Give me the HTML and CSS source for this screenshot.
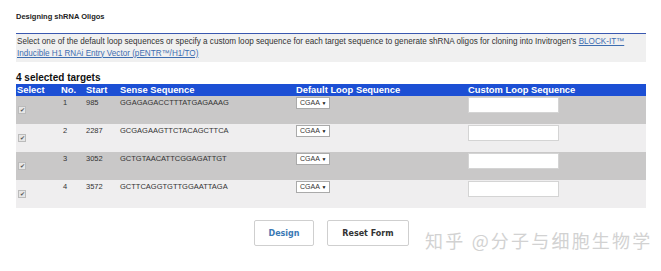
FILE: index.html
```
<!DOCTYPE html>
<html lang="en">
<head>
  <meta charset="UTF-8">
  <title>Designing shRNA Oligos</title>
  <link rel="stylesheet" href="styles.css">
</head>
<body>
  <div class="page">
    <h3 class="title">Designing shRNA Oligos</h3>

    <div class="intro">
      Select one of the default loop sequences or specify a custom loop sequence for each target sequence to generate shRNA oligos for cloning into Invitrogen's <a href="#">BLOCK-IT™ Inducible H1 RNAi Entry Vector (pENTR™/H1/TO)</a>
    </div>

    <h4 class="count">4 selected targets</h4>

    <table class="targets">
      <colgroup>
        <col class="c-select">
        <col class="c-no">
        <col class="c-start">
        <col class="c-seq">
        <col class="c-loop">
        <col class="c-custom">
      </colgroup>
      <thead>
        <tr>
          <th>Select</th>
          <th>No.</th>
          <th>Start</th>
          <th>Sense Sequence</th>
          <th>Default Loop Sequence</th>
          <th>Custom Loop Sequence</th>
        </tr>
      </thead>
      <tbody>
        <tr class="dark">
          <td class="chk"><span class="box">✔</span></td>
          <td class="num">1</td>
          <td>985</td>
          <td>GGAGAGACCTTTATGAGAAAG</td>
          <td><span class="drop">CGAA <i>▼</i></span></td>
          <td><span class="field"></span></td>
        </tr>
        <tr>
          <td class="chk"><span class="box">✔</span></td>
          <td class="num">2</td>
          <td>2287</td>
          <td>GCGAGAAGTTCTACAGCTTCA</td>
          <td><span class="drop">CGAA <i>▼</i></span></td>
          <td><span class="field"></span></td>
        </tr>
        <tr class="dark">
          <td class="chk"><span class="box">✔</span></td>
          <td class="num">3</td>
          <td>3052</td>
          <td>GCTGTAACATTCGGAGATTGT</td>
          <td><span class="drop">CGAA <i>▼</i></span></td>
          <td><span class="field"></span></td>
        </tr>
        <tr>
          <td class="chk"><span class="box">✔</span></td>
          <td class="num">4</td>
          <td>3572</td>
          <td>GCTTCAGGTGTTGGAATTAGA</td>
          <td><span class="drop">CGAA <i>▼</i></span></td>
          <td><span class="field"></span></td>
        </tr>
      </tbody>
    </table>

    <div class="actions">
      <button class="btn btn-design">Design</button>
      <button class="btn">Reset Form</button>
    </div>

    <div class="watermark">知乎 @分子与细胞生物学</div>
  </div>
</body>
</html>
```

FILE: styles.css
```
/* mise en page generale */
body {
  margin: 0;
  background: #fff;
  font-family: "Liberation Sans", Arial, sans-serif;
  color: #333;
}

.page {
  position: relative;
  width: 630px;
  padding: 12px 0 24px 16px;
}

.title {
  margin: 0;
  font-size: 7.5px;
  line-height: 9px;
  font-weight: bold;
  color: #222;
}

.intro {
  margin-top: 12px;
  border-top: 1px solid #3a58b0;
  background: #f0f0f0;
  padding: 2px 4px 3px 1px;
  font-size: 8.15px;
  line-height: 11.5px;
  color: #333;
}

.intro a {
  color: #3d6db0;
}

.count {
  margin: 10px 0 0 0;
  font-size: 10px;
  line-height: 12px;
  font-weight: bold;
  color: #111;
}

.targets {
  width: 630px;
  border-collapse: collapse;
  table-layout: fixed;
  margin-top: 0;
}

.c-select { width: 44px; }
.c-no { width: 25px; }
.c-start { width: 34px; }
.c-seq { width: 176px; }
.c-loop { width: 172px; }
.c-custom { width: 179px; }

.targets th {
  background: #1c4fd4;
  color: #fff;
  font-size: 9.4px;
  font-weight: bold;
  text-align: left;
  height: 12px;
  padding: 0 0 0 1px;
  line-height: 12px;
}

.targets td {
  height: 28px;
  padding: 1px 0 0 1px;
  vertical-align: top;
  font-size: 7.5px;
  line-height: 11px;
  background: #efeeef;
  color: #333;
  box-sizing: border-box;
}

.targets tr.dark td {
  background: #c9c8c8;
}

.targets td.chk {
  vertical-align: middle;
  padding: 0 0 2px 2px;
}

.targets td.num {
  padding-left: 3px;
}

.box {
  display: inline-block;
  width: 6px;
  height: 6px;
  background: #e6e6e6;
  border: 1px solid #bbb;
  font-size: 6px;
  line-height: 6px;
  text-align: center;
  color: #555;
  vertical-align: middle;
}

.drop {
  display: inline-block;
  background: #fff;
  border: 1px solid #aaa;
  padding: 0 3px;
  font-size: 7px;
  line-height: 10px;
  color: #333;
}

.drop i {
  font-style: normal;
  font-size: 5px;
  color: #111;
}

.field {
  display: block;
  width: 91px;
  height: 16px;
  background: #fff;
  border: 1px solid #d4d4d4;
  box-sizing: border-box;
}

.actions {
  display: flex;
  gap: 13px;
  padding: 12px 0 0 238px;
}

.btn {
  height: 26px;
  padding: 0;
  background: #fff;
  border: 1px solid #cfcfcf;
  border-radius: 2px;
  font-family: "DejaVu Sans", Verdana, sans-serif;
  font-size: 8px;
  font-weight: bold;
  color: #333;
  width: 82px;
}

.btn-design {
  width: 60px;
  color: #3a78b4;
}

.watermark {
  position: absolute;
  left: 425px;
  top: 229px;
  font-family: "Noto Sans CJK SC", sans-serif;
  font-size: 18px;
  line-height: 22px;
  letter-spacing: 2.2px;
  color: #d2d2d2;
  text-shadow: 0 0 1px #fff;
  white-space: nowrap;
}
```
